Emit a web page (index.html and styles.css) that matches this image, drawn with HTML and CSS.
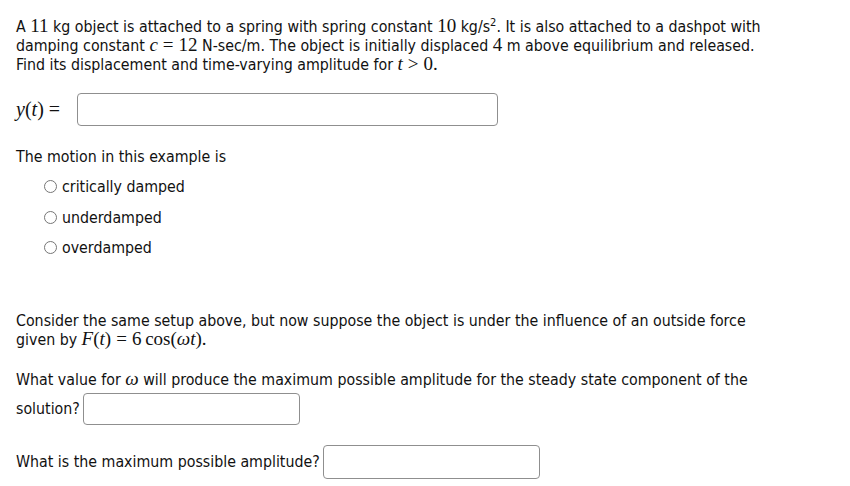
FILE: index.html
```html
<!DOCTYPE html>
<html>
<head>
<meta charset="utf-8">
<link rel="stylesheet" href="styles.css">
</head>
<body>
<div class="page">
  <p class="para">A <span class="m">11</span> kg object is attached to a spring with spring constant <span class="m">10</span> kg/s<sup>2</sup>. It is also attached to a dashpot with damping constant <span class="m"><i>c</i><span class="rel">=</span>12</span> N-sec/m. The object is initially displaced <span class="m">4</span> m above equilibrium and released. Find its displacement and time-varying amplitude for <span class="m"><i>t</i><span class="rel">&gt;</span>0.</span></p>

  <div class="answer-row">
    <span class="m label"><i>y</i>(<i>t</i>)<span class="rel">=</span></span>
    <span class="input wide"></span>
  </div>

  <p class="motion">The motion in this example is</p>
  <div class="options">
    <label class="option"><span class="radio"></span>critically damped</label>
    <label class="option"><span class="radio"></span>underdamped</label>
    <label class="option"><span class="radio"></span>overdamped</label>
  </div>

  <p class="para second">Consider the same setup above, but now suppose the object is under the influence of an outside force given by <span class="m"><i>F</i>(<i>t</i>)<span class="rel">=</span>6&thinsp;cos(<i>ωt</i>).</span></p>

  <p class="question">What value for <span class="m"><i>ω</i></span> will produce the maximum possible amplitude for the steady state component of the solution?<span class="input small"></span></p>

  <p class="question last">What is the maximum possible amplitude?<span class="input small tall"></span></p>
</div>
</body>
</html>
```

FILE: styles.css
```css
html, body {
  margin: 0;
  padding: 0;
  background: #fff;
}
.page {
  padding: 17px 16px 0 16px;
  width: 760px;
  font-family: "DejaVu Sans Condensed", "DejaVu Sans", sans-serif;
  font-size: 15.8px;
  color: #111;
  line-height: 19px;
}
p { margin: 0; }
.m {
  font-family: "Liberation Serif", "DejaVu Serif", serif;
  font-size: 19px;
  line-height: 0;
}
.m i { font-style: italic; }
.rel { margin: 0 5px; }
sup {
  font-size: 11px;
  line-height: 0;
  vertical-align: 6px;
}
.answer-row {
  display: flex;
  align-items: center;
  margin-top: 19px;
}
.label { line-height: 19px; margin-right: 12px; font-size: 20px; }
.input {
  display: inline-block;
  border: 1px solid #8f8f8f;
  border-radius: 4px;
  background: #fff;
  box-sizing: border-box;
  vertical-align: middle;
}
.input.wide { width: 421px; height: 33px; }
.input.small { width: 217px; height: 32px; margin-left: 3px; }
.input.small.tall { height: 34px; margin-left: 3px; }
.motion { margin-top: 21px; }
.options {
  display: flex;
  flex-direction: column;
  gap: 11.5px;
  margin-top: 11px;
  padding-left: 28px;
}
.option {
  display: flex;
  align-items: center;
  gap: 5px;
}
.radio {
  width: 13px;
  height: 13px;
  border: 1px solid #767676;
  border-radius: 50%;
  box-sizing: border-box;
  display: inline-block;
}
.second { margin-top: 54px; width: 735px; }
.question { margin-top: 18px; line-height: 26px; width: 740px; }
.question.last { margin-top: 20px; }
```
